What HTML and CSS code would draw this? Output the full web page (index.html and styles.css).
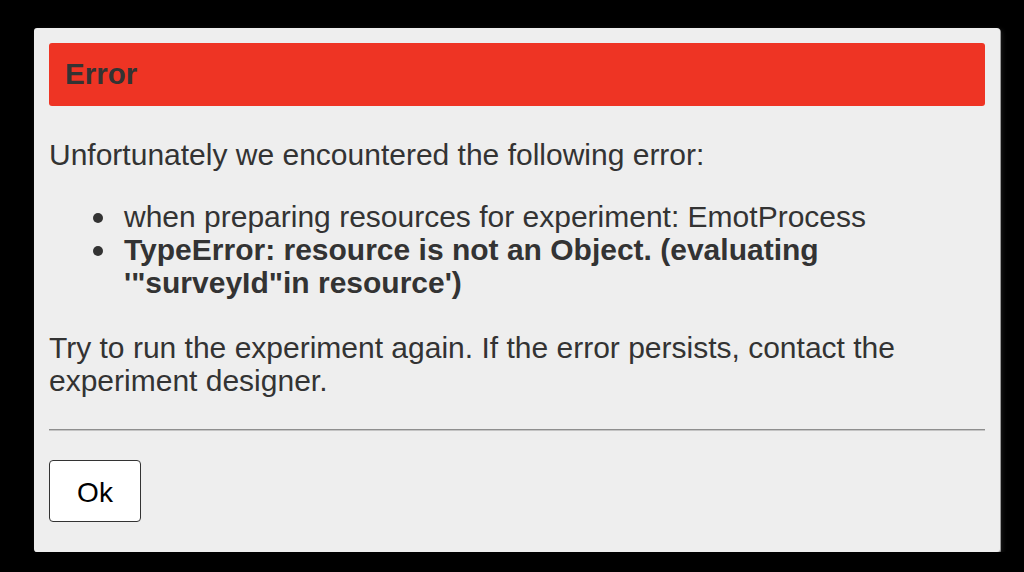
FILE: index.html
```html
<!DOCTYPE html>
<html>
<head>
<meta charset="utf-8">
<link rel="stylesheet" href="styles.css">
</head>
<body>
<div class="dialog">
  <div class="header">Error</div>
  <p class="intro">Unfortunately we encountered the following error:</p>
  <ul class="errors">
    <li>when preparing resources for experiment: EmotProcess</li>
    <li class="strong">TypeError: resource is not an Object. (evaluating '"surveyId"in resource')</li>
  </ul>
  <p class="advice">Try to run the experiment again. If the error persists, contact the experiment designer.</p>
  <div class="divider"></div>
  <button class="ok">Ok</button>
</div>
</body>
</html>
```
FILE: styles.css
```css
html, body {
  margin: 0;
  padding: 0;
  background: #000;
}
body {
  padding: 28px 0 0 34px;
  font-family: "Liberation Sans", Arial, sans-serif;
  color: #333;
}
.dialog {
  box-sizing: border-box;
  width: 966px;
  height: 524px;
  background: #eeeeee;
  border-radius: 3px;
  padding: 15px 15px 29px 15px;
  box-shadow: 1px 1px 0 #9a9a9a, 2px 2px 5px rgba(255,255,255,0.12);
}
.header {
  height: 63px;
  box-sizing: border-box;
  background: #ee3424;
  border-radius: 3px;
  display: flex;
  align-items: center;
  padding: 0 0 2px 16px;
  font-size: 29.5px;
  font-weight: bold;
  color: #333;
}
.intro, .advice {
  font-size: 30px;
  line-height: 33px;
  margin: 32px 0 0 0;
}
.errors {
  font-size: 30px;
  line-height: 33px;
  margin: 29px 0 0 0;
  padding-left: 75px;
  list-style: none;
}
.errors li {
  position: relative;
}
.errors li::before {
  content: "";
  position: absolute;
  left: -31px;
  top: 13px;
  width: 10px;
  height: 10px;
  border-radius: 50%;
  background: #333;
}
.errors .strong {
  font-weight: bold;
}
.divider {
  margin-top: 32px;
  border-top: 1px solid #8e8e8e;
  border-bottom: 1px solid #c4c4c4;
}
.ok {
  display: block;
  margin-top: 29px;
  width: 92px;
  height: 62px;
  background: #fff;
  border: 1px solid #333;
  border-radius: 4px;
  font-family: "Liberation Sans", Arial, sans-serif;
  font-size: 28px;
  color: #000;
  padding: 3px 0 0 0;
}
```
